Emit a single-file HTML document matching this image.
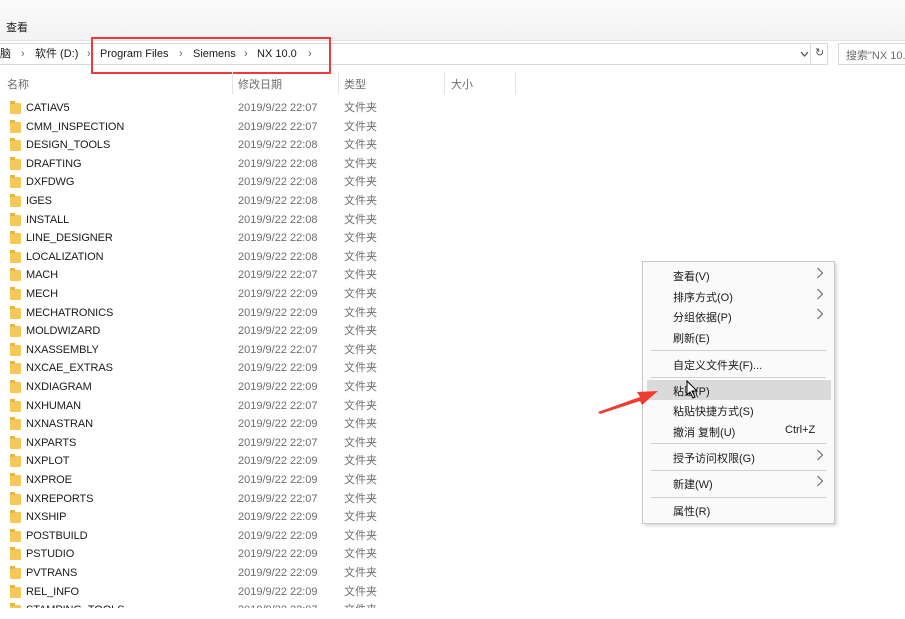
<!DOCTYPE html>
<html><head><meta charset="utf-8"><style>
*{margin:0;padding:0;box-sizing:border-box}
body{width:905px;height:618px;overflow:hidden;background:#fff;font-family:"Liberation Sans","Noto Sans CJK SC",sans-serif;font-size:11px;color:#1a1a1a;position:relative}
.a{position:absolute;white-space:nowrap}
.row{position:absolute;left:0;height:18px;line-height:18px}
.fold{position:absolute;left:10px;top:4px;width:11px;height:11px;background:#f5c958;border-radius:1px}
.fold:before{content:"";position:absolute;left:0;top:-2px;width:5px;height:3px;background:#e8b640}
.g{color:#6d6d6d}
.mi{position:absolute;left:673px;font-size:11px}
.sep{position:absolute;left:651px;width:175px;height:1px;background:#cfcfcf}
.bc{position:absolute;top:46px;height:16px;line-height:16px;font-size:11px;white-space:nowrap}
.arr{position:absolute;top:46px;height:16px;line-height:16px;color:#666;font-size:11px}
</style></head><body>
<div class="a" style="left:0;top:0;width:905px;height:40px;background:linear-gradient(#fafafa,#f3f3f3)"></div>
<div class="a" style="left:6px;top:19px;font-size:11px">查看</div>
<div class="a" style="left:0;top:40px;width:905px;height:1px;background:#e5e5e5"></div>
<div class="a" style="left:-2px;top:43px;width:830px;height:22px;border:1px solid #d9d9d9"></div>
<div class="a" style="left:810px;top:43px;width:1px;height:22px;background:#d9d9d9"></div>
<svg class="a" style="left:800px;top:50px" width="9" height="8"><path d="M1 2 L4.5 6 L8 2" fill="none" stroke="#555" stroke-width="1.3"/></svg>
<div class="a" style="left:815px;top:46px;color:#555">↻</div>
<div class="a" style="left:838px;top:43px;width:80px;height:22px;border:1px solid #d9d9d9"></div>
<div class="a g" style="left:846px;top:47px">搜索"NX 10.</div>
<div class="bc" style="left:0">脑</div><div class="arr" style="left:21px">›</div>
<div class="bc" style="left:35px">软件 (D:)</div><div class="arr" style="left:87px">›</div>
<div class="bc" style="left:100px">Program Files</div><div class="arr" style="left:179px">›</div>
<div class="bc" style="left:193px">Siemens</div><div class="arr" style="left:244px">›</div>
<div class="bc" style="left:257px">NX 10.0</div><div class="arr" style="left:308px">›</div>
<div class="a" style="left:91px;top:37px;width:240px;height:37px;border:2px solid #ee3a3a"></div>
<div class="a g" style="left:7px;top:76px">名称</div>
<div class="a" style="left:232px;top:72px;width:1px;height:22px;background:#e5e5e5"></div>
<div class="a g" style="left:238px;top:76px">修改日期</div>
<div class="a" style="left:338px;top:72px;width:1px;height:22px;background:#e5e5e5"></div>
<div class="a g" style="left:344px;top:76px">类型</div>
<div class="a" style="left:444px;top:72px;width:1px;height:22px;background:#e5e5e5"></div>
<div class="a g" style="left:451px;top:76px">大小</div>
<div class="a" style="left:515px;top:72px;width:1px;height:22px;background:#e5e5e5"></div>
<div id="rows"></div>
<script>
var n=[["CATIAV5","07"],["CMM_INSPECTION","07"],["DESIGN_TOOLS","08"],["DRAFTING","08"],["DXFDWG","08"],["IGES","08"],["INSTALL","08"],["LINE_DESIGNER","08"],["LOCALIZATION","08"],["MACH","07"],["MECH","09"],["MECHATRONICS","09"],["MOLDWIZARD","09"],["NXASSEMBLY","07"],["NXCAE_EXTRAS","09"],["NXDIAGRAM","09"],["NXHUMAN","07"],["NXNASTRAN","09"],["NXPARTS","07"],["NXPLOT","09"],["NXPROE","09"],["NXREPORTS","07"],["NXSHIP","09"],["POSTBUILD","09"],["PSTUDIO","09"],["PVTRANS","09"],["REL_INFO","09"],["STAMPING_TOOLS","07"]];
var h="";n.forEach(function(r,i){var y=99+i*18.6;h+='<div class="row" style="top:'+y+'px;width:520px"><div class="fold"></div><span class="a" style="left:26px;letter-spacing:-0.1px">'+r[0]+'</span><span class="a g" style="left:238px">2019/9/22 22:'+r[1]+'</span><span class="a g" style="left:344px">文件夹</span></div>';});
document.getElementById("rows").innerHTML=h;
</script>
<div class="a" style="left:0;top:608px;width:905px;height:10px;background:#fff"></div>
<div class="a" style="left:642px;top:261px;width:193px;height:263px;border:1px solid #c8c8c8;background:#fafafa;box-shadow:2px 2px 3px rgba(0,0,0,.15)"></div>
<div class="a" style="left:647px;top:380px;width:184px;height:20px;background:#dadada"></div>
<div class="mi" style="top:268px">查看(V)</div>
<div class="mi" style="top:289px">排序方式(O)</div>
<div class="mi" style="top:309px">分组依据(P)</div>
<div class="mi" style="top:330px">刷新(E)</div>
<div class="sep" style="top:350px"></div>
<div class="mi" style="top:357px">自定义文件夹(F)...</div>
<div class="sep" style="top:377px"></div>
<div class="mi" style="top:383px">粘贴(P)</div>
<div class="mi" style="top:403px">粘贴快捷方式(S)</div>
<div class="mi" style="top:424px">撤消 复制(U)</div><div class="a" style="left:785px;top:424px">Ctrl+Z</div>
<div class="sep" style="top:443px"></div>
<div class="mi" style="top:450px">授予访问权限(G)</div>
<div class="sep" style="top:470px"></div>
<div class="mi" style="top:476px">新建(W)</div>
<div class="sep" style="top:497px"></div>
<div class="mi" style="top:503px">属性(R)</div>
<svg class="a" style="left:816px;top:267px" width="8" height="12"><path d="M1.5 1 L6.5 6 L1.5 11" fill="none" stroke="#666" stroke-width="1.1"/></svg>
<svg class="a" style="left:816px;top:288px" width="8" height="12"><path d="M1.5 1 L6.5 6 L1.5 11" fill="none" stroke="#666" stroke-width="1.1"/></svg>
<svg class="a" style="left:816px;top:308px" width="8" height="12"><path d="M1.5 1 L6.5 6 L1.5 11" fill="none" stroke="#666" stroke-width="1.1"/></svg>
<svg class="a" style="left:816px;top:449px" width="8" height="12"><path d="M1.5 1 L6.5 6 L1.5 11" fill="none" stroke="#666" stroke-width="1.1"/></svg>
<svg class="a" style="left:816px;top:475px" width="8" height="12"><path d="M1.5 1 L6.5 6 L1.5 11" fill="none" stroke="#666" stroke-width="1.1"/></svg>
<svg class="a" style="left:590px;top:380px" width="80" height="40"><polygon points="8,32 50,17 47,12 68,11 52,25 50,21 10,34" fill="#f03c2f"/></svg>
<svg class="a" style="left:686px;top:380px" width="14" height="20"><path d="M1 1 L1 15 L4 12 L7 18 L9 17 L6 11 L11 11 Z" fill="#fff" stroke="#000" stroke-width="1"/></svg>
</body></html>
